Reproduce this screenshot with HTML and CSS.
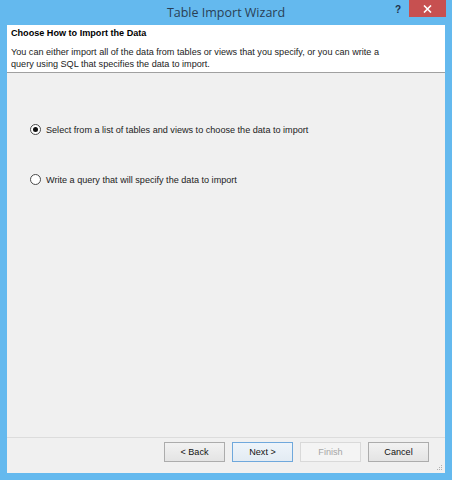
FILE: index.html
```html
<!DOCTYPE html>
<html>
<head>
<meta charset="utf-8">
<link rel="stylesheet" href="styles.css">
</head>
<body>
<div class="window">
  <div class="titlebar">
    <div class="tb-side"></div>
    <div class="title">Table Import Wizard</div>
    <div class="tb-side tb-controls">
      <span class="help">?</span>
      <span class="close">
        <svg width="9" height="8" viewBox="0 0 9 8"><path d="M1 0.5 L8 7.5 M8 0.5 L1 7.5" stroke="#fff" stroke-width="1.6"/></svg>
      </span>
    </div>
  </div>
  <div class="client">
    <div class="header">
      <div class="h-title">Choose How to Import the Data</div>
      <div class="h-desc">You can either import all of the data from tables or views that you specify, or you can write a<br>query using SQL that specifies the data to import.</div>
    </div>
    <div class="body">
      <div class="option"><span class="radio checked"></span><span>Select from a list of tables and views to choose the data to import</span></div>
      <div class="option"><span class="radio"></span><span>Write a query that will specify the data to import</span></div>
    </div>
    <div class="footer">
      <button class="btn">&lt; Back</button>
      <button class="btn default">Next &gt;</button>
      <button class="btn disabled">Finish</button>
      <button class="btn">Cancel</button>
      <svg class="grip" width="6" height="6" viewBox="0 0 6 6"><rect x="4" y="0" width="1" height="1" fill="#b0b0b0"/><rect x="2" y="2" width="1" height="1" fill="#b0b0b0"/><rect x="4" y="2" width="1" height="1" fill="#b0b0b0"/><rect x="0" y="4" width="1" height="1" fill="#b0b0b0"/><rect x="2" y="4" width="1" height="1" fill="#b0b0b0"/><rect x="4" y="4" width="1" height="1" fill="#b0b0b0"/></svg>
    </div>
  </div>
</div>
</body>
</html>
```

FILE: styles.css
```css
html, body {
  margin: 0;
  padding: 0;
}
body {
  width: 452px;
  height: 480px;
  overflow: hidden;
  background: #64b9ee;
}
.window {
  width: 452px;
  height: 480px;
  background: #64b9ee;
  display: flex;
  flex-direction: column;
  box-sizing: border-box;
}
.titlebar {
  height: 25px;
  display: grid;
  grid-template-columns: 1fr auto 1fr;
  align-items: start;
  flex: none;
}
.title {
  font-family: "Open Sans", "Noto Sans", sans-serif;
  font-size: 12.5px;
  color: #2a3f55;
  line-height: 25px;
}
.tb-controls {
  display: flex;
  justify-content: flex-end;
  align-items: flex-start;
  padding-right: 6px;
}
.help {
  font-family: "Liberation Sans", Arial, sans-serif;
  font-weight: bold;
  font-size: 10px;
  color: #1d3148;
  margin-top: 4px;
  margin-right: 8px;
}
.close {
  width: 37px;
  height: 17px;
  background: #c75050;
  display: flex;
  align-items: center;
  justify-content: center;
}
.client {
  flex: 1;
  margin: 0 7px 7px 7px;
  background: #f0f0f0;
  display: flex;
  flex-direction: column;
  position: relative;
  font-family: "Liberation Sans", Arial, sans-serif;
  font-size: 9.1px;
  color: #000;
}
.header {
  background: #fff;
  height: 48px;
  border-bottom: 1px solid #a0a0a0;
  padding: 1px 0 0 4px;
  box-sizing: border-box;
  flex: none;
}
.h-title {
  font-weight: bold;
  line-height: 14px;
}
.h-desc {
  margin-top: 6px;
  line-height: 12px;
  color: #222;
}
.body {
  flex: 1;
  padding: 50px 0 0 23px;
  display: flex;
  flex-direction: column;
  gap: 37px;
}
.option {
  display: flex;
  align-items: center;
  gap: 5px;
  height: 13px;
  color: #222;
}
.radio {
  width: 11px;
  height: 11px;
  border: 1px solid #4a4a4a;
  border-radius: 50%;
  background: #fff;
  box-sizing: border-box;
  display: flex;
  align-items: center;
  justify-content: center;
  flex: none;
}
.radio.checked::after {
  content: "";
  width: 5px;
  height: 5px;
  border-radius: 50%;
  background: #111;
}
.footer {
  height: 36px;
  border-top: 1px solid #dcdcdc;
  box-sizing: border-box;
  flex: none;
  display: flex;
  justify-content: flex-end;
  align-items: flex-start;
  gap: 7px;
  padding: 4px 16px 0 0;
}
.btn {
  width: 61px;
  height: 20px;
  margin: 0;
  padding: 0;
  border: 1px solid #acacac;
  background: linear-gradient(#f2f2f2, #e4e4e4);
  font-family: "Liberation Sans", Arial, sans-serif;
  font-size: 9.1px;
  color: #111;
  border-radius: 0;
}
.btn.default {
  border-color: #6fa8dc;
  background: linear-gradient(#eef4fa, #e3ebf3);
}
.btn.disabled {
  border-color: #d9d9d9;
  background: #f4f4f4;
  color: #a6a6a6;
}
.grip {
  position: absolute;
  right: 2px;
  bottom: 2px;
}
```
